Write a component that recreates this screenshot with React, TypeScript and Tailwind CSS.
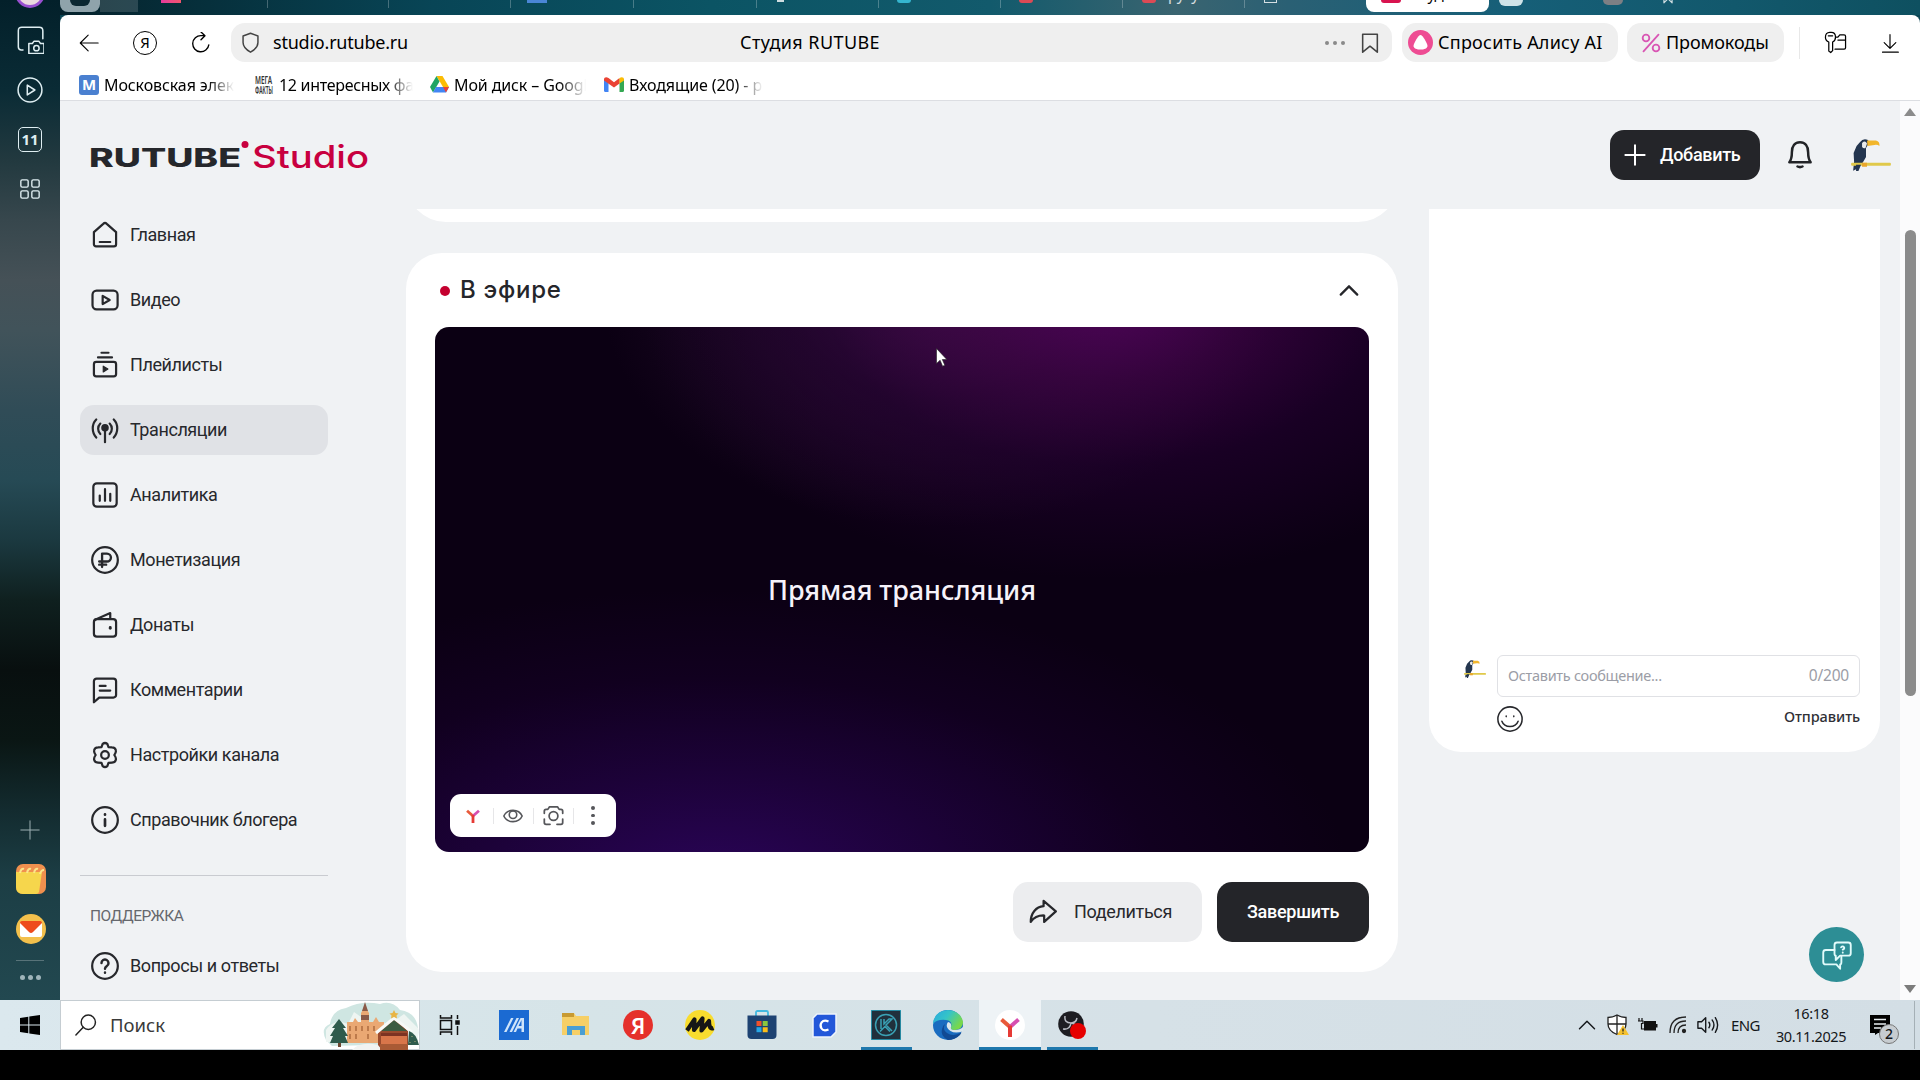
import React from "react";

type Kids = { children?: React.ReactNode };

const Svg = ({ s, vb = "0 0 24 24", w = 1.7, c = "", children }: Kids & { s: number; vb?: string; w?: number; c?: string }) => (
  <svg width={s} height={s} viewBox={vb} fill="none" stroke="currentColor" strokeWidth={w} strokeLinecap="round" strokeLinejoin="round" className={"shrink-0 " + c}>
    {children}
  </svg>
);

/* ---------- Tab strip ---------- */

const TabStrip = () => (
  <div className="flex h-[15px] overflow-hidden bg-[linear-gradient(90deg,#05222c_0%,#06303c_8%,#084556_20%,#0b5464_35%,#125a6c_50%,#3a6470_60%,#2a6074_66%,#165f78_78%,#12586c_90%,#0e5060_100%)] text-white/80">
    <div className="h-3 w-10 shrink-0 rounded-b-lg bg-[#8fa3ab]">
      <div className="mx-auto h-1.5 w-5 rounded-b-md bg-[#0b2731]" />
    </div>
    <div className="h-3 w-[38px] shrink-0 bg-white/15" />
    <div className="ml-[23px] h-[3px] w-5 shrink-0 bg-gradient-to-r from-[#e6399b] to-[#f0546c]" />
    <div className="ml-[86px] h-2 w-px shrink-0 bg-white/25" />
    <div className="ml-[120px] h-2 w-px shrink-0 bg-white/25" />
    <div className="ml-[121px] h-2 w-px shrink-0 bg-white/25" />
    <div className="ml-[16px] h-[3px] w-5 shrink-0 bg-[#4a86d6]" />
    <div className="ml-[86px] h-2 w-px shrink-0 bg-white/25" />
    <div className="ml-[122px] h-2 w-px shrink-0 bg-white/25" />
    <div className="ml-[20px] h-[2px] w-[7px] shrink-0 bg-white/80" />
    <div className="ml-[94px] h-2 w-px shrink-0 bg-white/25" />
    <div className="ml-[18px] h-[3px] w-[14px] shrink-0 rounded-b-lg bg-[#35b5cf]" />
    <div className="ml-[89px] h-2 w-px shrink-0 bg-white/25" />
    <div className="ml-[18px] h-[3px] w-[14px] shrink-0 rounded-b-lg bg-[#dc4a55]" />
    <div className="ml-[89px] h-2 w-px shrink-0 bg-white/25" />
    <div className="ml-[19px] h-[3px] w-[14px] shrink-0 rounded-b-lg bg-[#dc4a55]" />
    <div className="-mt-[16px] ml-[12px] w-[76px] shrink-0 text-[15px] leading-[20px]">руту</div>
    <div className="h-2 w-px shrink-0 bg-white/25" />
    <div className="ml-[19px] h-[3px] w-[13px] shrink-0 border border-t-0 border-white/80" />
    <div className="ml-[89px] flex h-3 w-[123px] shrink-0 overflow-hidden rounded-b-lg bg-white text-black">
      <div className="ml-[15px] h-[3px] w-5 rounded-b-[4px] bg-[#d8134f]" />
      <div className="-mt-[16px] ml-[10px] text-[15px] leading-[20px]">Студия</div>
    </div>
    <div className="ml-[10px] h-[6px] w-6 shrink-0 rounded-b-full bg-[#cfe3e8]" />
    <div className="ml-[80px] h-[5px] w-5 shrink-0 rounded-b-full bg-[#7d7f84]" />
    <Svg s={14} w={2} c="ml-[38px] -mt-[10px]">
      <path d="M5 2v20l7-7 7 7V2" />
    </Svg>
  </div>
);

/* ---------- Toolbar ---------- */

const Toolbar = () => (
  <div className="flex h-[56px] items-center pb-px text-[18px] text-black">
    <Svg s={20} w={1.3} c="ml-[19px]">
      <path d="M23 12H1.500M11 2.500L1.500 12l9.500 9.500" />
    </Svg>
    <div className="ml-[34px] flex size-[24px] items-center justify-center rounded-full border-[1.5px] border-black text-[15px] leading-none">Я</div>
    <Svg s={22} w={1.5} c="ml-[33px]">
      <path d="M20.500 14A8.800 8.800 0 1 1 12 4h4M12 0l4.300 4-4.300 4.500" />
    </Svg>
    <div className="ml-[19px] flex h-[39px] w-[1161px] items-center rounded-[14px] bg-[#efefef]">
      <Svg s={21} w={1.7} c="ml-[9px] text-[#444]">
        <path d="M12 1.500l8.500 3V12c0 5-4 8.500-8.500 11C7.500 20.500 3.500 17 3.500 12V4.500z" />
      </Svg>
      <span className="ml-[12px] w-[137px] pb-px tracking-[-0.22px]">studio.rutube.ru</span>
      <span className="ml-[330px] w-[150px] whitespace-nowrap pb-px tracking-[0.42px]">Студия RUTUBE</span>
      <div className="ml-[435px] flex gap-[4px]">
        {[0, 1, 2].map((i) => (
          <div key={i} className="size-[4px] rounded-full bg-[#8a8a8a]" />
        ))}
      </div>
      <Svg s={22} w={1.7} c="ml-[14px] text-[#444]">
        <path d="M4 2.500h16v19.500l-8-6.500-8 6.500z" />
      </Svg>
    </div>
    <div className="ml-[10px] flex h-[39px] w-[216px] items-center rounded-[14px] bg-[#efefef]">
      <svg width="25" height="25" viewBox="0 0 25 25" className="ml-[6px] shrink-0">
        <circle cx="12.500" cy="12.500" r="12.500" fill="#ee4c93" />
        <path d="M12.500 5c2 0 7 8.500 7 11 0 2.500-3.500 3.600-7 3.600s-7-1.100-7-3.600c0-2.500 5-11 7-11z" fill="#fff" />
      </svg>
      <span className="ml-[5px] whitespace-nowrap pb-px tracking-[0.24px]">Спросить Алису AI</span>
    </div>
    <div className="ml-[9px] flex h-[39px] w-[157px] items-center rounded-[14px] bg-[#efefef]">
      <Svg s={20} w={2.200} c="ml-[14px] text-[#d957b4]">
        <circle cx="6" cy="6" r="4" />
        <circle cx="18" cy="18" r="4" />
        <path d="M21 2L3 22" />
      </Svg>
      <span className="ml-[5px] whitespace-nowrap pb-px tracking-[-0.1px]">Промокоды</span>
    </div>
    <div className="ml-[15px] h-8 w-px bg-[#e8e8e8]" />
    <Svg s={23} w={1.3} c="ml-[24px]">
      <path d="M5 11.500C2.500 10.500 1.500 8.500 1.500 6.500 1.500 3.500 3 1.500 6 1.500h1.500c3 0 4.500 2 4.500 5 0 2-1 4-3 5V20.500L7 22.500 5 21zM4.500 5h4.500M13 6.500h1.500l2-2.500h4.500a1.500 1.500 0 0 1 1.500 1.500v12a1.500 1.500 0 0 1-1.500 1.500H11.500M14.500 9.500h8" />
    </Svg>
    <Svg s={20} w={1.400} c="ml-[33px]">
      <path d="M12 2v16M5 11.500l7 7 7-7M3 23h19" />
    </Svg>
  </div>
);

const Fade = ({ children, w }: Kids & { w: string }) => (
  <div className={"ml-[5px] overflow-hidden whitespace-nowrap bg-[linear-gradient(90deg,#000_80%,transparent)] bg-clip-text text-transparent " + w}>{children}</div>
);

const Bookmarks = () => (
  <div className="flex h-[30px] items-center border-b border-[#dcdee2] pb-[2px] text-[16px]">
    <div className="ml-[19px] flex size-5 items-center justify-center rounded-[3px] bg-[#4a80d0] text-[15px] font-bold text-white">М</div>
    <Fade w="w-[130px] tracking-[-0.1px]">Московская электронная</Fade>
    <svg width="19" height="20" viewBox="0 0 19 20" className="ml-[21px] shrink-0">
      <text x="0" y="9" fontSize="10.500" textLength="17" lengthAdjust="spacingAndGlyphs" fill="#333" fontWeight="600">МЕГА</text>
      <text x="0" y="19" fontSize="10.500" textLength="18" lengthAdjust="spacingAndGlyphs" fill="#333" fontWeight="600">ФАКТЫ</text>
    </svg>
    <Fade w="w-[134px] tracking-[-0.3px]">12 интересных фактов</Fade>
    <svg width="19" height="17" viewBox="0 0 19 17" className="ml-[17px] shrink-0">
      <path d="M6.500 0h6l6.500 11h-6z" fill="#fbbc05" />
      <path d="M6.500 0L9.500 5.500 3 16.500 0 11z" fill="#1fa463" />
      <path d="M6 11h13l-3 5.500H3z" fill="#4285f4" />
      <path d="M13 11h6l-3 5.500z" fill="#ea4335" />
    </svg>
    <Fade w="w-[132px] tracking-[-0.12px]">Мой диск – Google Диск</Fade>
    <svg width="20" height="15" viewBox="0 0 20 15" className="ml-[18px] shrink-0">
      <path d="M0 2h4.500v13H1.500A1.500 1.500 0 0 1 0 13.500z" fill="#4285f4" />
      <path d="M15.500 2H20v11.500a1.500 1.500 0 0 1-1.500 1.500h-3z" fill="#34a853" />
      <path d="M0 2.500C0 0 2.500-.5 4.500 1L10 5.200 15.500 1v5.500L10 10.500 0 3.500z" fill="#ea4335" />
      <path d="M15.500 1C17.500-.5 20 0 20 2.500v1l-4.500 3z" fill="#fbbc04" />
    </svg>
    <Fade w="w-[134px] tracking-[-0.1px]">Входящие (20) - pochta</Fade>
  </div>
);

/* ---------- Dock on the left edge ---------- */

const Dock = () => (
  <div className="flex w-[60px] shrink-0 flex-col items-center bg-[linear-gradient(180deg,#03202a_0%,#0a2b35_9%,#22393f_16%,#37474d_22%,#455157_28%,#41535a_33%,#304c57_41%,#264a55_48%,#1b3940_54%,#0f201f_60%,#080f0f_67%,#0a1614_74%,#132b2f_81%,#1c3e45_88%,#224850_100%)] text-[#dfeef2]">
    <div className="h-[8px] w-[30px] overflow-hidden">
      <div className="-mt-[22px] size-[30px] rounded-full border-[3px] border-[#9a4fd0] bg-[#ecd9df]" />
    </div>
    <Svg s={28} w={1.3} c="mt-[18px]">
      <path d="M6 20.500H4.500C3 20.500 2 19.500 2 18V4c0-2 1-3 3-3h15c2 0 3 1 3 3v7M11 15h3l1.500-2h4l1.500 2h3v8.500H11z" />
      <circle cx="17.500" cy="19" r="2.300" />
    </Svg>
    <Svg s={26} w={1.400} c="mt-[23px]">
      <circle cx="12" cy="12" r="11" />
      <path d="M9.500 7.500v9l7-4.500z" />
    </Svg>
    <div className="mt-[24px] flex h-[25px] w-[24px] items-center justify-center rounded-[5px] border-[1.5px] border-[#dfeef2] text-[15px] font-bold">11</div>
    <Svg s={22} w={1.500} c="mt-[26px]">
      <rect x="2" y="2" width="8" height="8" rx="1.500" />
      <rect x="14" y="2" width="8" height="8" rx="1.500" />
      <rect x="2" y="14" width="8" height="8" rx="1.500" />
      <rect x="14" y="14" width="8" height="8" rx="1.500" />
    </Svg>
    <div className="grow" />
    <Svg s={20} w={1.200} c="mb-[24px] text-[#9db0b3]">
      <path d="M12 1v22M1 12h22" />
    </Svg>
    <svg width="30" height="30" viewBox="0 0 30 30" className="ml-[1px]">
      <rect width="30" height="30" rx="7" fill="#f0904e" />
      <path d="M0 8h26l-3 20q-1 2-3 2H7q-7 0-7-7z" fill="#f6d64c" />
      <path d="M4 9q1-5 4-4M11 9q1-5 4-4M18 9q1-5 4-4M24 10q1-4 4-4" stroke="#fbe58a" strokeWidth="2" fill="none" />
    </svg>
    <svg width="30" height="30" viewBox="0 0 30 30" className="ml-[1px] mt-[20px]">
      <circle cx="15" cy="15" r="15" fill="#f3c04c" />
      <path d="M4 9h22v12q0 2-2 2H6q-2 0-2-2z" fill="#fff" />
      <path d="M4 9q0-2 2-2h18q2 0 2 2L17 18q-2 2-4 0z" fill="#ee4b1c" />
    </svg>
    <div className="mt-[16px] h-px w-7 bg-white/25" />
    <div className="mb-[20px] mt-[14px] flex gap-[3px]">
      {[0, 1, 2].map((i) => (
        <div key={i} className="size-[5px] rounded-full bg-[#9fb4ba]" />
      ))}
    </div>
  </div>
);

/* ---------- Studio ---------- */

const Toucan = ({ s }: { s: number }) => (
  <svg width={s} height={s * 0.82} viewBox="0 0 40 33" className="shrink-0">
    <path d="M9 3q3-4 8-2l1 3-3 5v9l-4 7-5 5-4 2 1-9-.500-9 3-7z" fill="#24364f" />
    <path d="M11 4q3-3 5 .500l-1.500 4.500q-2 1-3.500-1z" fill="#e9eaea" />
    <path d="M16 1.500h9q4 1 3.500 5.500-2-1.500-5-1l-7 1z" fill="#f2b62c" />
    <rect y="24" width="40" height="3" rx="1" fill="#e0c94a" />
    <path d="M5 26h5l-3 7H5z" fill="#24364f" />
    <path d="M11 24h5v4h-5z" fill="#e9a72c" />
  </svg>
);

const Header = () => (
  <div className="flex h-[108px] shrink-0 items-center">
    <svg width="280" height="32" viewBox="0 0 280 32" className="ml-[30px]">
      <text x="-1" y="28.200" fontFamily="Inter" fontWeight="800" fontSize="25.500" textLength="152" lengthAdjust="spacingAndGlyphs" fill="#25272b">RUTUBE</text>
      <circle cx="155" cy="5.500" r="3.500" fill="#c8003f" />
      <text x="162" y="28.700" fontFamily="Inter" fontWeight="500" fontSize="31.500" textLength="117" lengthAdjust="spacingAndGlyphs" fill="#c8003f">Studio</text>
    </svg>
    <div className="grow" />
    <div className="mb-px flex h-[50px] w-[150px] items-center rounded-[14px] bg-[#242529] font-[Roboto] text-[18px] font-medium text-white">
      <Svg s={22} w={2.200} c="ml-[14px]">
        <path d="M12 1.500v21M1.500 12h21" />
      </Svg>
      <span className="ml-[14px] tracking-[-0.3px]">Добавить</span>
    </div>
    <Svg s={30} w={2} c="ml-[25px] -mt-[2px] text-[#222427]">
      <path d="M3.500 18.500h17c-1.500-2-2-4-2-8 0-5-2.500-8-6.500-8s-6.500 3-6.500 8c0 4-.5 6-2 8zM10 22q2 1 4 0" />
    </Svg>
    <div className="ml-[36px] mr-[9px]"><Toucan s={40} /></div>
  </div>
);

const icons: Record<string, React.ReactNode> = {
  home: <path d="M2.500 9.500L10.500 2.400a2.200 2.200 0 0 1 3 0l8 7.100V20a1.800 1.800 0 0 1-1.800 1.800H4.300A1.800 1.800 0 0 1 2.500 20zM7.500 18h9" />,
  video: (
    <>
      <rect x="1.300" y="4" width="21.500" height="16" rx="3.500" />
      <path d="M10 8.500v7l6-3.500z" />
    </>
  ),
  list: (
    <>
      <path d="M9 1.500h6M6 5.500h12" />
      <rect x="2.500" y="9.300" width="19" height="12.500" rx="2" />
      <path d="M10.500 13v5l4-2.500z" fill="currentColor" strokeWidth="1" />
    </>
  ),
  live: (
    <>
      <path d="M4.500 3C.5 7 .5 14 4.500 18.500M19.500 3c4 4 4 11 0 15.500M8 6.500c-2.500 2.500-2.500 6.500 0 9M16 6.500c2.500 2.500 2.500 6.500 0 9M12 12v10.500" />
      <circle cx="12" cy="10" r="2.300" fill="currentColor" />
    </>
  ),
  stats: (
    <>
      <rect x="2" y="2" width="20" height="20" rx="3" />
      <path d="M7.500 12.500V17M12 7v10M16.500 11v6" />
    </>
  ),
  money: (
    <>
      <circle cx="12" cy="12" r="11" />
      <path d="M9.500 18V6.500h4.200a3.400 3.400 0 0 1 0 6.800H7M7 16h6" strokeWidth="2" />
    </>
  ),
  wallet: (
    <>
      <rect x="2.500" y="7" width="19" height="15" rx="2.500" />
      <path d="M3.500 7.500L16.500 1.800v5" />
      <path d="M16.500 14.200v.6" strokeWidth="2.500" />
    </>
  ),
  comment: <path d="M2.500 22.500V4.500a2.300 2.300 0 0 1 2.300-2.300h14.400a2.300 2.300 0 0 1 2.300 2.300v11.700a2.300 2.300 0 0 1-2.300 2.300H7zM7.500 8.500h5M7.500 12.500h9" />,
  gear: (
    <>
      <circle cx="12" cy="12" r="3.300" />
      <path d="M10 2.500q2-1.600 4 0l1 2.700 3 .3q2.800.2 3.300 2.500.4 1.500-1.300 4 1.700 2.500 1.300 4-.5 2.300-3.300 2.500l-3 .3-1 2.700q-2 1.600-4 0l-1-2.700-3-.3Q3.200 18.300 2.700 16q-.4-1.500 1.300-4-1.700-2.500-1.300-4Q3.200 5.700 6 5.500l3-.3z" />
    </>
  ),
  info: (
    <>
      <circle cx="12" cy="12" r="11" />
      <path d="M12 11.500v5.500M12 7.200v.3" strokeWidth="2.300" />
    </>
  ),
  help: (
    <>
      <circle cx="12" cy="12" r="11" />
      <path d="M9 9.500a3 3 0 1 1 4.600 2.500c-1.100.8-1.600 1.200-1.600 2.300M12 17.500v.2" strokeWidth="2.100" />
    </>
  ),
};

const menu: [string, string][] = [
  ["home", "Главная"],
  ["video", "Видео"],
  ["list", "Плейлисты"],
  ["live", "Трансляции"],
  ["stats", "Аналитика"],
  ["money", "Монетизация"],
  ["wallet", "Донаты"],
  ["comment", "Комментарии"],
  ["gear", "Настройки канала"],
  ["info", "Справочник блогера"],
];

const Item = ({ icon, label }: { icon: string; label: string }) => (
  <div className={"flex h-[50px] shrink-0 items-center rounded-[14px] pl-[11px] text-[18px] text-[#27282c] " + (icon === "live" ? "bg-[#e0e2e6]" : "")}>
    <Svg s={28} w={1.9}>{icons[icon]}</Svg>
    <span className="ml-[11px] whitespace-nowrap pb-[2px] tracking-[-0.42px]">{label}</span>
  </div>
);

const Sidebar = () => (
  <div className="ml-[20px] flex w-[248px] shrink-0 flex-col font-[Roboto]">
    <div className="flex flex-col gap-[15px] pt-px">
      {menu.map(([i, l]) => (
        <Item key={i} icon={i} label={l} />
      ))}
    </div>
    <div className="mt-[30px] h-px shrink-0 bg-[#c9cbd0]" />
    <div className="mt-[28px] pl-[10px] text-[15.500px] leading-6 tracking-[-0.45px] text-[#66686d]">ПОДДЕРЖКА</div>
    <div className="mt-[13px]">
      <Item icon="help" label="Вопросы и ответы" />
    </div>
  </div>
);

const YMark = ({ s }: { s: number }) => (
  <svg width={s} height={s} viewBox="0 0 20 20" fill="none" strokeWidth="4">
    <path d="M1.500 2.500L10 10" stroke="#e85a3a" />
    <path d="M18.500 2.500L10 10" stroke="#d64fb0" />
    <path d="M10 8.500V20" stroke="#e63a35" />
  </svg>
);

const Player = () => (
  <div className="relative mx-[29px] flex h-[525px] items-center justify-center rounded-[14px] bg-[radial-gradient(ellipse_50%_54%_at_72%_-6%,#4e0458_0%,rgba(62,3,70,0.75)_30%,rgba(36,0,50,0.55)_60%,rgba(12,0,20,0)_100%),radial-gradient(ellipse_36%_44%_at_54%_-6%,#44194c_0%,rgba(46,16,54,0.6)_45%,rgba(20,0,30,0)_100%),radial-gradient(ellipse_68%_56%_at_30%_106%,#2a0458_0%,#1c0238_38%,#11001f_70%,rgba(12,0,20,0)_100%)] bg-[#0b0013]">
    <span className="pt-[2px] font-[Noto_Sans] text-[27px] font-medium tracking-[-0.05px] text-[#f6f2fa]">Прямая трансляция</span>
    <svg width="11" height="20" viewBox="0 0 11 20" className="absolute left-[501px] top-[21px]">
      <path d="M.5.500v15l3.600-3.300 2.500 6 2.200-1-2.500-5.700h4.500z" fill="#fff" stroke="#222" strokeWidth=".6" />
    </svg>
    <div className="absolute bottom-[15px] left-[15px] flex h-[43px] w-[166px] items-center rounded-[11px] bg-white text-[#55565a]">
      <div className="flex w-[43px] justify-center pl-[2px]"><YMark s={14} /></div>
      <div className="h-4 w-px bg-[#e6e6e8]" />
      <div className="flex w-[39px] justify-center pr-px">
        <Svg s={20} w={1.900}>
          <path d="M1 12c4-9 18-9 22 0-4 9-18 9-22 0z" />
          <circle cx="12" cy="10.500" r="4.500" />
        </Svg>
      </div>
      <div className="h-4 w-px bg-[#e6e6e8]" />
      <div className="flex w-[39px] justify-center pr-px">
        <Svg s={21} w={2}>
          <circle cx="12" cy="12.500" r="5" />
          <path d="M1.500 9.500V7q0-2 2-2h2l2-3h9l2 3h2q2 0 2 2v2.500M1.500 16v4q0 2 2 2H8M22.500 16v4q0 2-2 2H16" />
        </Svg>
      </div>
      <div className="h-4 w-px bg-[#e6e6e8]" />
      <div className="flex w-[40px] flex-col items-center gap-[4px] pr-[2px]">
        {[0, 1, 2].map((i) => (
          <div key={i} className="size-[3.500px] rounded-full bg-[#55565a]" />
        ))}
      </div>
    </div>
  </div>
);

const Main = () => (
  <div className="ml-[78px] flex w-[992px] shrink-0 flex-col">
    <div className="h-[13px] overflow-hidden">
      <div className="-mt-[87px] h-[100px] rounded-[40px] bg-white" />
    </div>
    <div className="mt-[31px] h-[719px] rounded-[36px] bg-white">
      <div className="flex h-[74px] items-center">
        <div className="ml-[34px] mt-px size-[10px] rounded-full bg-[#c4002f]" />
        <span className="ml-[10px] pb-px font-[Inter] text-[24px] font-medium tracking-[0.7px] text-[#25262a]">В эфире</span>
        <div className="grow" />
        <Svg s={22} w={2.500} c="mr-[38px] text-[#25262a]">
          <path d="M3 17l9-9 9 9" />
        </Svg>
      </div>
      <Player />
      <div className="mr-[29px] mt-[30px] flex justify-end gap-[15px] font-[Roboto] text-[18px]">
        <div className="flex h-[60px] w-[189px] items-center rounded-[15px] bg-[#ecedef] text-[#27282c]">
          <Svg s={28} w={1.900} c="ml-[16px]">
            <path d="M12.500 2.500L23 11.500l-10 9v-5.500C8 14.800 4 17 1.500 20.500 1.500 13 6 7.500 12.500 7z" />
          </Svg>
          <span className="ml-[17px] pb-px tracking-[-0.35px]">Поделиться</span>
        </div>
        <div className="flex h-[60px] w-[152px] items-center justify-center rounded-[15px] bg-[#242529] pb-px font-medium tracking-[-0.25px] text-white">Завершить</div>
      </div>
    </div>
  </div>
);

const Chat = () => (
  <div className="ml-[31px] flex w-[451px] shrink-0 flex-col">
    <div className="flex h-[543px] flex-col rounded-b-[32px] bg-white pl-[35px] pr-[20px] font-[Noto_Sans]">
      <div className="h-[446px]" />
      <div className="flex">
        <div className="mt-[5px] w-[33px]"><Toucan s={22} /></div>
        <div className="flex h-[42px] w-[363px] items-center justify-between rounded-[6px] border border-[#e0e1e5] pl-[10px] pr-[10px] text-[#9b9da6]">
          <span className="text-[14.500px] tracking-[-0.3px]">Оставить сообщение...</span>
          <span className="text-[15.500px] tracking-[-0.2px]">0/200</span>
        </div>
      </div>
      <div className="flex items-start pl-[33px] pt-[9px]">
        <Svg s={26} w={1.400} c="text-[#27282c]">
          <circle cx="12" cy="12" r="11.200" />
          <path d="M4.500 14c2.500 6.500 12.500 6.500 15 0M8.500 9.200v.6M15.500 9.200v.6" />
        </Svg>
        <span className="ml-auto text-[14.500px] font-medium leading-[21px] tracking-[-0.08px] text-[#303136]">Отправить</span>
      </div>
    </div>
    <div className="ml-auto mr-[16px] mt-[175px] flex size-[55px] items-center justify-center rounded-full bg-[#2d8e95] text-[#e2fbfb]">
      <Svg s={30} w={1.500}>
        <path d="M12 2h9q2 0 2 2v6.500q0 2-2 2h-6.500L11 16v-3.500q-1 0-1-2V4q0-2 2-2z" />
        <path d="M10 8H3Q1 8 1 10v7.500q0 2 2 2h8.500L14.500 23v-3.500q1 0 1-2V13" />
        <path d="M15.300 5.800q1.200-1.400 2.400 0 .4 1.300-1.100 1.900M16.600 10v.1" />
      </Svg>
    </div>
  </div>
);

const Scrollbar = () => (
  <div className="flex w-5 shrink-0 flex-col items-center bg-[#fbfbfc]">
    <div className="mt-[7px] size-0 border-x-[6px] border-b-[8px] border-x-transparent border-b-[#8c8c8c]" />
    <div className="mt-[114px] h-[466px] w-[11px] rounded-full bg-[#8b8b8b]" />
    <div className="mt-[289px] size-0 border-x-[6px] border-t-[8px] border-x-transparent border-t-[#7c7c7c]" />
  </div>
);

/* ---------- Taskbar ---------- */

const Cell = ({ children, on, bar }: Kids & { on?: boolean; bar?: string }) => (
  <div className={"relative flex h-[50px] w-[62px] shrink-0 items-center justify-center " + (on ? "bg-[#eef3f6]" : "")}>
    {children}
    {bar && <div className={"absolute bottom-0 h-[3px] bg-[#1f78ad] " + bar} />}
  </div>
);

const Village = () => (
  <svg width="97" height="50" viewBox="0 0 97 50" className="shrink-0">
    <path d="M4 40Q-2 28 8 24 10 10 24 8 40 0 58 4 70 0 78 10 94 12 96 28q2 12-6 16l-80 2z" fill="#cfe6e2" />
    <path d="M4 30q8-12 22-6l6-12 14 10 22 2 14-10 14 14v14H4z" fill="#eef5f2" />
    <path d="M25 22h6l2-4 3 4h3V13l4-7 4 7v9h4l3-5 3 5h5v21H25z" fill="#eaa873" />
    <path d="M40 11l3-9 3 9zM39 20h8v-5h-8z" fill="#8a5a48" />
    <path d="M28 26v5M34 26v5M40 26v5M46 26v5M52 26v5M28 34v5M34 34v5M46 34v5" stroke="#b97648" strokeWidth="1.800" />
    <path d="M17 19l-7 9h3l-5 8h3l-3 7h18l-3-7h3l-5-8h3z" fill="#2f5b4c" />
    <path d="M16 43h3v4h-3z" fill="#6d4630" />
    <path d="M56 31L72 18 86 31v19H56z" fill="#9a4a2d" />
    <path d="M59 33h26v11H59z" fill="#d9764a" />
    <path d="M59 33h26v3H59z" fill="#7d3322" />
    <path d="M59 31l13-11 13 11z" fill="#3c5b41" />
    <path d="M54 33L72 18l18 14" stroke="#f7faf8" strokeWidth="3" fill="none" />
    <path d="M72 10l1.500 3 3 .5-2 2 .5 3-3-1.500-3 1.500.5-3-2-2 3-.5z" fill="#e8b545" />
    <path d="M87 31q7 2 10 14H86z" fill="#2f5b4c" />
    <path d="M90 36v.5M93 41v.5M88 42v.5" stroke="#d9c38a" strokeWidth="1.500" />
    <path d="M30 50q8-9 26-5l4 5z" fill="#f1f3f1" />
    <path d="M58 44h28v6H58z" fill="#a95a35" />
  </svg>
);

const Taskbar = () => (
  <div className="flex h-[50px] bg-[linear-gradient(90deg,#dbe8ee_0%,#d6e4e8_30%,#d6e1e7_60%,#d3dee5_100%)]">
    <div className="flex w-[60px] shrink-0 items-center justify-center">
      <svg width="20" height="20" viewBox="0 0 20 20">
        <path d="M0 3l8.300-1.200v7.700H0zM9.300 1.600L20 0v9.500H9.300zM0 10.500h8.300v7.700L0 17zM9.300 10.500H20V20L9.300 18.400z" />
      </svg>
    </div>
    <div className="flex w-[360px] shrink-0 items-center border border-[#c5cdd2] bg-white">
      <Svg s={22} w={1.600} c="ml-[14px] text-[#222]">
        <circle cx="14.500" cy="9" r="7.800" />
        <path d="M9 14.500L1 23" />
      </Svg>
      <span className="ml-[13px] text-[18.500px] text-[#3a3a3a]">Поиск</span>
      <div className="ml-auto"><Village /></div>
    </div>
    <div className="flex pl-px">
      <Cell>
        <svg width="22" height="20" viewBox="0 0 22 20" fill="none" stroke="#111" strokeWidth="1.500" className="mr-[4px]">
          <path d="M1.500 0v3h11V0M1.500 20v-3h11v3M1.500 5.500h11v9h-11zM18.500 0v4M18.500 11v9" />
          <path d="M17 6h3v3h-3z" fill="#111" />
        </svg>
      </Cell>
      <Cell>
        <svg width="30" height="30" viewBox="0 0 30 30">
          <rect width="30" height="30" fill="#1b6ad2" />
          <path d="M5 22L12 8h2.500l-7 14zM10.500 22L17.500 8H20l-7 14zM14.500 22L21.500 8H25v14h-2.500v-3.500h-4L17 22zM19.500 16h3v-6z" fill="#cfe4fa" />
        </svg>
      </Cell>
      <Cell>
        <svg width="30" height="26" viewBox="0 0 30 26">
          <path d="M1 1h12l2 3h13v19H1z" fill="#f6cf66" />
          <path d="M1 1h12v4H1z" fill="#c89a32" />
          <path d="M6 14h18v9h-5v-5h-8v5H6z" fill="#4a9ed2" />
        </svg>
      </Cell>
      <Cell>
        <div className="flex size-[30px] items-center justify-center rounded-full bg-[#e5302b] text-[22px] font-semibold leading-none text-white">Я</div>
      </Cell>
      <Cell>
        <svg width="32" height="30" viewBox="0 0 32 30">
          <circle cx="16" cy="15" r="15" fill="#f8dc2e" />
          <path d="M3 20.500L10.500 9.500 10 20 18.500 8.500 17.500 20.500 25 11q0 9 4.500 7" stroke="#161616" strokeWidth="4.200" fill="none" strokeLinejoin="round" />
        </svg>
      </Cell>
      <Cell>
        <svg width="30" height="30" viewBox="0 0 30 30">
          <path d="M9 6V2.500Q9 1 10.500 1h9Q21 1 21 2.500V6" stroke="#42b8e0" strokeWidth="1.800" fill="none" />
          <path d="M.5 5.500h29V25q0 4-4 4h-21q-4 0-4-4z" fill="#1d4272" />
          <path d="M9.500 11h5v5h-5z" fill="#f0512c" />
          <path d="M15.700 11h5v5h-5z" fill="#8cc63e" />
          <path d="M9.500 17.200h5v5h-5z" fill="#28a7e6" />
          <path d="M15.700 17.200h5v5h-5z" fill="#fbbd1a" />
        </svg>
      </Cell>
      <Cell>
        <svg width="25" height="25" viewBox="0 0 25 25">
          <path d="M5 1h19v18l-5 5H1V5z" fill="#2357d9" stroke="#eef4fb" strokeWidth="1.500" />
          <path d="M16.500 8.500Q12 6.500 9.500 9.500q-2 3 0 6t7 1" stroke="#fff" strokeWidth="2.200" fill="none" />
        </svg>
      </Cell>
      <Cell bar="w-[51px]">
        <svg width="30" height="30" viewBox="0 0 30 30" fill="none" stroke="#3aa0b4" strokeWidth="1.500">
          <rect width="30" height="30" fill="#20303c" stroke="#2aa6c2" />
          <circle cx="15" cy="15" r="10.500" />
          <path d="M10 9v10M13 9v5l5-5h3l-6 6 6 6M9 21.500l5-5 5 5" />
        </svg>
      </Cell>
      <Cell>
        <svg width="30" height="30" viewBox="0 0 30 30">
          <defs>
            <linearGradient id="eg" x1="0" y1="0" x2="1" y2=".5">
              <stop offset="0" stopColor="#28a8e0" />
              <stop offset=".5" stopColor="#35c4c8" />
              <stop offset="1" stopColor="#78d84a" />
            </linearGradient>
          </defs>
          <circle cx="15" cy="15" r="15" fill="#1a6cc0" />
          <path d="M0 14Q1 1 15 0q13 1 15 12 0 7-8 8-5 0-4-3 2-6-5-7Q4 9 0 14z" fill="url(#eg)" />
          <path d="M12 14q-3 6 2 9 6 4 14.500-.5L27 25q-5 5-12 5Q7 26 9 19q1-4 3-5z" fill="#114a94" />
          <path d="M15 12q4 1 3 5-1 3 4 3 5 0 8-3l.5 4q-8 3-13 0-6-4-2.500-9z" fill="#dbe6ec" />
        </svg>
      </Cell>
      <Cell on bar="w-full">
        <div className="flex size-[30px] items-center justify-center rounded-full bg-white pt-1"><YMark s={20} /></div>
      </Cell>
      <Cell bar="w-[51px]">
        <svg width="30" height="30" viewBox="0 0 30 30">
          <circle cx="14" cy="14" r="12.800" fill="#1d1d22" />
          <path d="M8 6q-1 7 6 7 5 0 6-5M14 13q-1 7-8 6M14 13q7 1 6 8" stroke="#b9bcc4" strokeWidth="1.500" fill="none" />
          <circle cx="21" cy="21" r="8" fill="#e60000" />
        </svg>
      </Cell>
    </div>
    <div className="ml-auto flex items-center text-[#14171a]">
      <Svg s={18} w={1.900}>
        <path d="M2 17L12 7l10 10" />
      </Svg>
      <svg width="22" height="22" viewBox="0 0 22 22" className="ml-[11px]">
        <path d="M10 1q4 2.500 9 2.500V10q0 7-9 10.500Q1 17 1 10V3.500Q6 3.500 10 1z" fill="#fff" stroke="#222" strokeWidth="1.300" />
        <path d="M10 1v19M1 10h18" stroke="#222" strokeWidth="1.300" />
        <path d="M16 11l6 10H10z" fill="#f5c12e" />
        <path d="M16 14.500v3M16 18.700v1" stroke="#222" strokeWidth="1.300" />
      </svg>
      <svg width="20" height="16" viewBox="0 0 20 16" className="ml-[9px]">
        <path d="M1 1v3M4 1v3M0 4h5v2.500H3.500V12H6" stroke="#111" strokeWidth="1.200" fill="none" />
        <path d="M6 4h12v3h1.500v3.500H18v3H6z" fill="#111" />
      </svg>
      <svg width="18" height="18" viewBox="0 0 18 18" className="ml-[11px]" fill="none" stroke="#222" strokeWidth="1.300">
        <path d="M1 17Q1 1 17 1M5 17Q5 5 17 5M9 17Q9 9 17 9" />
        <circle cx="15" cy="15" r="1.500" fill="#222" />
      </svg>
      <Svg s={22} w={1.500} c="ml-[10px]">
        <path d="M1 8.500h4L9.500 4v16L5 15.500H1zM13 9q2 3 0 6M16.500 6.500q4 5.500 0 11M20 4q5 8 0 16" />
      </Svg>
      <span className="ml-[12px] w-[30px] text-[15px] tracking-[-0.6px]">ENG</span>
      <div className="ml-[13px] w-[74px] whitespace-nowrap text-center text-[14.500px] leading-[23px] tracking-[-0.4px]">
        <div>16:18</div>
        <div>30.11.2025</div>
      </div>
      <div className="relative ml-[22px] mr-[24px] h-[20px] w-[20px]">
        <svg width="20" height="20" viewBox="0 0 20 20">
          <path d="M0 0h20v18H8l-3 2v-2H0z" />
          <path d="M4 4.500h12M4 9h12M4 13h7" stroke="#e7edf0" strokeWidth="1.500" />
        </svg>
        <div className="absolute left-[9px] top-[9px] flex size-[20px] items-center justify-center rounded-full border border-[#777] bg-[#c7ccd0] text-[14px] font-medium leading-none">2</div>
      </div>
      <div className="mr-[5px] h-12 w-px bg-[#a5b0b6]" />
    </div>
  </div>
);

export default function App() {
  return (
    <div className="flex h-[1080px] w-[1920px] flex-col overflow-hidden bg-black font-['Noto_Sans',sans-serif]">
      <div className="flex h-[1000px] shrink-0">
        <Dock />
        <div className="flex w-[1860px] flex-col bg-[#0b4554]">
          <TabStrip />
          <div className="flex h-[985px] flex-col overflow-hidden rounded-t-[8px] bg-white">
            <Toolbar />
            <Bookmarks />
            <div className="flex h-[899px] bg-[#f0f2f4]">
              <div className="flex w-[1840px] shrink-0 flex-col overflow-hidden">
                <Header />
                <div className="flex h-[791px]">
                  <Sidebar />
                  <Main />
                  <Chat />
                </div>
              </div>
              <Scrollbar />
            </div>
          </div>
        </div>
      </div>
      <Taskbar />
    </div>
  );
}
